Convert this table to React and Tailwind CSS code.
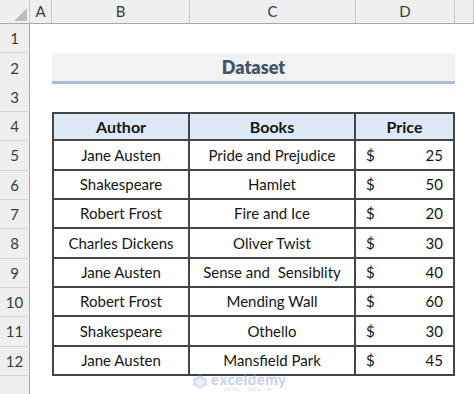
import React from 'react'

const rows = [
  ['Jane Austen', 'Pride and Prejudice', 25],
  ['Shakespeare', 'Hamlet', 50],
  ['Robert Frost', 'Fire and Ice', 20],
  ['Charles Dickens', 'Oliver Twist', 30],
  ['Jane Austen', 'Sense and  Sensiblity', 40],
  ['Robert Frost', 'Mending Wall', 60],
  ['Shakespeare', 'Othello', 30],
  ['Jane Austen', 'Mansfield Park', 45],
]

const grid = 'grid grid-cols-[30px_22px_138px_166px_99px_1fr]'

const RowLabel = ({ n }) => (
  <div className="flex items-center justify-center bg-[#efefef] border-r border-r-[#a8a8a8] border-b border-b-[#d6d6d6] text-[15px] text-[#3b3b3b]">
    {n}
  </div>
)

const Cell = ({ children, className = '' }) => (
  <div className={`flex items-center justify-center border-r-2 border-b-2 border-[#454545] whitespace-pre ${className}`}>
    {children}
  </div>
)

export default function App() {
  return (
    <div className="w-[474px] h-[394px] overflow-hidden bg-white relative text-[#151515]" style={{ fontFamily: 'Lato, "Open Sans", sans-serif' }}>

      {/* Column headers */}
      <div className={`${grid} h-[24px] bg-[#efefef] border-b border-[#a8a8a8] text-[15px] text-[#3b3b3b]`}>
        <div className="relative border-r border-[#c8c8c8]">
          <svg className="absolute left-[14px] top-[8px]" width="13" height="13" viewBox="0 0 13 13">
            <polygon points="13,0 13,13 0,13" fill="#bdbdbd" />
          </svg>
        </div>
        {['A', 'B', 'C', 'D', ''].map((l, i) => (
          <div key={i} className="flex items-center justify-center border-r border-[#c8c8c8]">{l}</div>
        ))}
      </div>

      {/* Row 1 */}
      <div className={`${grid} h-[29px]`}>
        <RowLabel n={1} />
      </div>

      {/* Row 2 - title */}
      <div className={`${grid} h-[30px]`}>
        <RowLabel n={2} />
        <div />
        <div className="col-span-3 flex items-center justify-center bg-[#f2f2f2] border-b-[3px] border-[#a7bbe0] text-[18px] font-extrabold text-[#44546a] pt-[1px]">
          Dataset
        </div>
      </div>

      {/* Row 3 */}
      <div className={`${grid} h-[29px]`}>
        <RowLabel n={3} />
      </div>

      {/* Row 4 - table header */}
      <div className={`${grid} h-[29px]`}>
        <RowLabel n={4} />
        <div />
        <Cell className="bg-[#dde9f7] border-l-2 border-t-2 font-bold text-[16px]">Author</Cell>
        <Cell className="bg-[#dde9f7] border-t-2 font-bold text-[16px]">Books</Cell>
        <Cell className="bg-[#dde9f7] border-t-2 font-bold text-[16px]">Price</Cell>
      </div>

      {/* Data rows */}
      {rows.map(([author, book, price], i) => (
        <div key={i} className={`${grid} ${i % 3 === 0 ? 'h-[30px]' : 'h-[29px]'}`}>
          <RowLabel n={i + 5} />
          <div />
          <Cell className="border-l-2 text-[15px]">{author}</Cell>
          <Cell className="text-[15px]">{book}</Cell>
          <Cell className="!justify-between px-[10px] text-[15px]">
            <span>$</span>
            <span>{price}</span>
          </Cell>
        </div>
      ))}

      {/* Row 13 (partial) */}
      <div className={`${grid} h-[29px]`}>
        <RowLabel n="" />
      </div>

      {/* Watermark */}
      <div className="absolute left-[192px] top-[372px] flex items-center gap-[3px] opacity-50">
        <svg width="16" height="16" viewBox="0 0 16 16">
          <polygon points="8,1 15,5 15,11 8,15 1,11 1,5" fill="#b5c2e6" />
          <polygon points="8,4 12,6.5 12,10 8,12.5 4,10 4,6.5" fill="#d7def2" />
        </svg>
        <div className="flex flex-col items-center gap-[1px]">
          <span className="text-[15px] leading-[14px] font-bold text-[#8f9fe0] tracking-[0.5px]">exceldemy</span>
          <span className="text-[4px] leading-[5px] text-[#9aa3c0] tracking-[1px]">EXCEL · DATA · BI</span>
        </div>
      </div>
    </div>
  )
}
